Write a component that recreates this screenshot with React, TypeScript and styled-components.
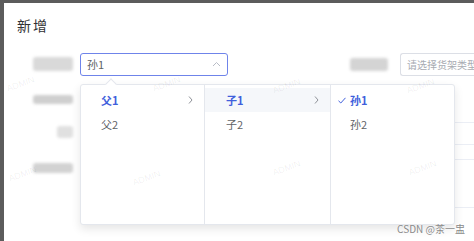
import styled, { createGlobalStyle } from "styled-components";

const GlobalStyle = createGlobalStyle`
    html, body {
        margin: 0;
        padding: 0;
        background: #5c5c5c;
    }
    * {
        box-sizing: border-box;
    }
`;

const FONT = `"Noto Sans CJK SC", "Noto Sans", "Liberation Sans", sans-serif`;

const Page = styled.div`
    width: 474px;
    height: 241px;
    overflow: hidden;
    padding: 3px 0 0 4px;
    font-family: ${FONT};
`;

const Dialog = styled.div`
    position: relative;
    height: 100%;
    background: #fff;
    overflow: hidden;
`;

const Header = styled.div`
    padding: 12px 0 0 13px;
    height: 50px;
`;

const Title = styled.div`
    font-size: 14px;
    line-height: 20px;
    letter-spacing: 2px;
    color: #303133;
`;

const FirstRow = styled.div`
    display: flex;
    align-items: center;
    padding-left: 29px;
    height: 22px;
`;

const BlurLabel = styled.div<{ $w: number; $h: number; $tone?: string; $offset?: number }>`
    width: ${(p) => p.$w}px;
    height: ${(p) => p.$h}px;
    margin-left: ${(p) => p.$offset ?? 0}px;
    background: ${(p) => p.$tone ?? "#d6d6d6"};
    border-radius: 3px;
    filter: blur(1.6px);
    flex-shrink: 0;
`;

const Select = styled.div`
    margin-left: 7px;
    width: 148px;
    height: 23px;
    border: 1px solid #6f84ea;
    border-radius: 3px;
    display: flex;
    align-items: center;
    justify-content: space-between;
    padding: 0 6px 0 6px;
    font-size: 11px;
    color: #606266;
    flex-shrink: 0;
`;

const RightLabel = styled(BlurLabel)`
    margin-left: 122px;
`;

const Input = styled.div`
    margin-left: 12px;
    width: 90px;
    height: 23px;
    border: 1px solid #dcdfe6;
    border-right: none;
    border-radius: 3px 0 0 3px;
    display: flex;
    align-items: center;
    padding-left: 6px;
    font-size: 10px;
    color: #a8abb2;
    white-space: nowrap;
    overflow: hidden;
    flex-shrink: 0;
`;

const Rest = styled.div`
    display: flex;
`;

const LabelColumn = styled.div`
    display: flex;
    flex-direction: column;
    padding-left: 29px;
`;

const LabelRow = styled.div<{ $top: number }>`
    margin-top: ${(p) => p.$top}px;
    display: flex;
`;

const GhostTable = styled.div`
    margin-left: auto;
    width: 19px;
    display: flex;
    flex-direction: column;
`;

const GhostLine = styled.div<{ $top: number }>`
    margin-top: ${(p) => p.$top}px;
    height: 1px;
    background: #ebeef5;
`;

const Popper = styled.div`
    position: absolute;
    top: 81px;
    left: 76px;
    width: 375px;
    height: 141px;
    background: #fff;
    border: 1px solid #e4e7ed;
    border-radius: 3px;
    box-shadow: 0 4px 10px rgba(0, 0, 0, 0.1);
    display: flex;
    z-index: 2;
`;

const PopArrow = styled.div`
    position: absolute;
    top: -5px;
    left: 26px;
    width: 8px;
    height: 8px;
    background: #fff;
    border-left: 1px solid #e4e7ed;
    border-top: 1px solid #e4e7ed;
    transform: rotate(45deg);
`;

const Column = styled.div<{ $w: number; $last?: boolean }>`
    width: ${(p) => p.$w}px;
    height: 100%;
    padding-top: 3px;
    border-right: ${(p) => (p.$last ? "none" : "1px solid #e4e7ed")};
    flex-shrink: 0;
`;

const Node = styled.div<{ $active?: boolean; $hover?: boolean; $pad: number }>`
    height: 24px;
    display: flex;
    align-items: center;
    padding: 0 11px 0 ${(p) => p.$pad}px;
    font-size: 11px;
    background: ${(p) => (p.$hover ? "#f5f7fa" : "transparent")};
    color: ${(p) => (p.$active ? "#3f5fdc" : "#606266")};
    font-weight: ${(p) => (p.$active ? 700 : 400)};
`;

const NodeLabel = styled.span`
    flex: 1;
`;

const CheckSlot = styled.span`
    width: 12px;
    margin-left: -12px;
    display: inline-flex;
    align-items: center;
`;

const Watermark = styled.span<{ $x: number; $y: number }>`
    position: absolute;
    left: ${(p) => p.$x}px;
    top: ${(p) => p.$y}px;
    font-family: "Liberation Sans", sans-serif;
    font-size: 9px;
    color: rgba(0, 0, 0, 0.07);
    transform: rotate(-20deg);
    pointer-events: none;
    white-space: nowrap;
    z-index: 3;
`;

const Credit = styled.div`
    position: absolute;
    right: 9px;
    bottom: 5px;
    font-size: 10px;
    color: #8a8a8a;
    text-shadow: 0 0 2px #fff;
    z-index: 4;
    white-space: nowrap;
`;

const ChevronUp = () => (
    <svg width="9" height="6" viewBox="0 0 9 6">
        <polyline points="1,5 4.5,1.5 8,5" fill="none" stroke="#b8bcc6" strokeWidth="1" />
    </svg>
);

const ChevronRight = () => (
    <svg width="5" height="8" viewBox="0 0 5 8">
        <polyline points="1,0.5 4,4 1,7.5" fill="none" stroke="#909399" strokeWidth="1" />
    </svg>
);

const Check = () => (
    <svg width="8" height="7" viewBox="0 0 8 7">
        <polyline points="0.5,3.8 2.8,6 7.5,0.8" fill="none" stroke="#3f5fdc" strokeWidth="1" />
    </svg>
);

const columns = [
    {
        width: 124,
        pad: 20,
        nodes: [
            { label: "父1", active: true, hover: false, arrow: true },
            { label: "父2" },
        ],
    },
    {
        width: 126,
        pad: 21,
        nodes: [
            { label: "子1", active: true, hover: true, arrow: true },
            { label: "子2" },
        ],
    },
    {
        width: 123,
        pad: 19,
        last: true,
        nodes: [
            { label: "孙1", active: true, check: true },
            { label: "孙2" },
        ],
    },
];

const watermarks = [
    { x: 2, y: 76, text: "ADMIN" },
    { x: 148, y: 76, text: "ADMIN" },
    { x: 268, y: 78, text: "ADMIN" },
    { x: 402, y: 78, text: "ADMIN" },
    { x: 4, y: 166, text: "ADMIN" },
    { x: 128, y: 170, text: "ADMIN" },
    { x: 268, y: 160, text: "ADMIN" },
    { x: 404, y: 160, text: "ADMIN" },
];

export default function App() {
    return (
        <Page>
            <GlobalStyle />
            <Dialog>
                <Header>
                    <Title>新增</Title>
                </Header>

                <FirstRow>
                    <BlurLabel $w={40} $h={14} $tone="#d9d9d9" />
                    <Select>
                        <span>孙1</span>
                        <ChevronUp />
                    </Select>
                    <RightLabel $w={38} $h={13} $tone="#d4d4d4" />
                    <Input>请选择货架类型</Input>
                </FirstRow>

                <Rest>
                    <LabelColumn>
                        <LabelRow $top={20}>
                            <BlurLabel $w={40} $h={9} $tone="#cfcfcf" />
                        </LabelRow>
                        <LabelRow $top={22}>
                            <BlurLabel $w={16} $h={12} $tone="#e0e0e0" $offset={24} />
                        </LabelRow>
                        <LabelRow $top={25}>
                            <BlurLabel $w={40} $h={10} $tone="#d2d2d2" />
                        </LabelRow>
                    </LabelColumn>
                    <GhostTable>
                        <GhostLine $top={47} />
                        <GhostLine $top={21} />
                        <GhostLine $top={14} />
                        <GhostLine $top={47} />
                    </GhostTable>
                </Rest>

                <Popper>
                    <PopArrow />
                    {columns.map((col, ci) => (
                        <Column key={ci} $w={col.width} $last={col.last}>
                            {col.nodes.map((n: any) => (
                                <Node key={n.label} $pad={col.pad} $active={n.active} $hover={n.hover}>
                                    {n.check && (
                                        <CheckSlot>
                                            <Check />
                                        </CheckSlot>
                                    )}
                                    <NodeLabel>{n.label}</NodeLabel>
                                    {n.arrow && <ChevronRight />}
                                </Node>
                            ))}
                        </Column>
                    ))}
                </Popper>

                {watermarks.map((w, i) => (
                    <Watermark key={i} $x={w.x} $y={w.y}>
                        {w.text}
                    </Watermark>
                ))}

                <Credit>CSDN @茶一盅</Credit>
            </Dialog>
        </Page>
    );
}
